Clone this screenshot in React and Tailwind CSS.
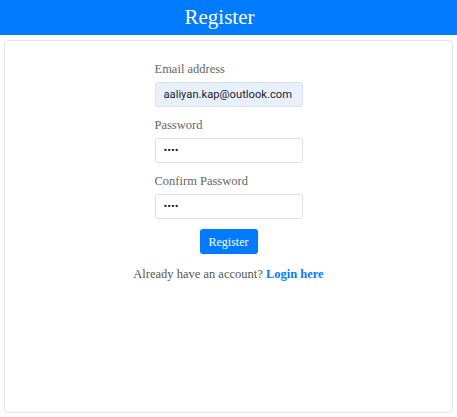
import React from "react";

const serif = { fontFamily: '"Liberation Serif", serif' };

const Field = ({ label, value, type, autofill }) => (
  <div className="mb-2">
    <label className="block text-[12.5px] leading-5 text-[#666] mb-[3px]" style={serif}>
      {label}
    </label>
    <input
      type={type}
      defaultValue={value}
      readOnly
      className={`block w-[148px] h-[25px] px-2 rounded-[3px] border border-[#dee2e6] text-[11.2px] text-[#212529] outline-none ${
        autofill ? "bg-[#e8f0fe]" : "bg-white"
      }`}
      style={{ fontFamily: "Roboto, sans-serif" }}
    />
  </div>
);

const App = () => {
  return (
    <div className="w-[457px] h-[417px] bg-white" style={serif}>
      <header className="bg-[#007bff] h-[35px] flex items-center justify-center pr-[18px]">
        <h1 className="text-white text-[21px] leading-none">Register</h1>
      </header>
      <div className="mx-[4px] mt-[5px] h-[373px] border border-[#e5e5e5] rounded-[4px] flex flex-col items-center pt-[18px]">
        <form className="w-[148px]">
          <Field label="Email address" value="aaliyan.kap@outlook.com" type="text" autofill />
          <Field label="Password" value="abcd" type="password" />
          <Field label="Confirm Password" value="abcd" type="password" />
          <div className="flex justify-center mt-[10px]">
            <button
              type="button"
              className="w-[58px] h-[25px] rounded-[3px] bg-[#007bff] text-white text-[12px]"
              style={serif}
            >
              Register
            </button>
          </div>
        </form>
        <p className="mt-[10px] text-[12.5px] leading-5 text-[#555]">
          Already have an account?{" "}
          <a href="#" className="text-[#007bff] font-bold">
            Login here
          </a>
        </p>
      </div>
    </div>
  );
};

export default App;
